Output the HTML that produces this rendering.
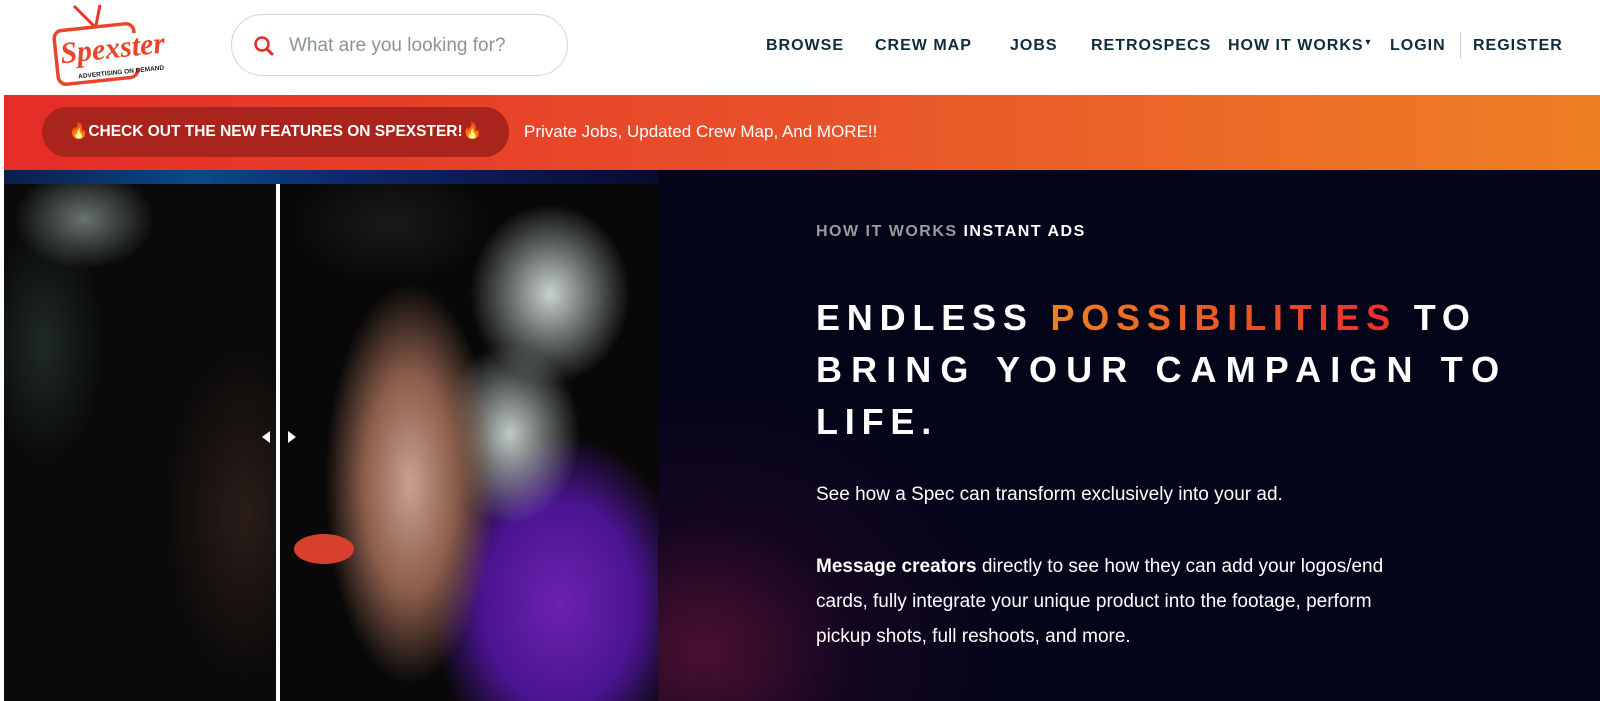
<!DOCTYPE html>
<html><head><meta charset="utf-8"><style>
*{margin:0;padding:0;box-sizing:border-box}
body{width:1600px;height:701px;overflow:hidden;background:#fff;font-family:"Liberation Sans",sans-serif;position:relative}
.hdr{position:absolute;left:0;top:0;width:1600px;height:94px;background:#fff}
.search{position:absolute;left:231px;top:14px;width:337px;height:62px;border:1px solid #cfd6da;border-radius:31px}
.search span{position:absolute;left:57px;top:20px;font-size:19px;color:#8a939c}
.nav{position:absolute;top:37px;font-size:16px;font-weight:bold;color:#0f2b3d;letter-spacing:1px}
.banner{position:absolute;left:4px;top:95px;width:1596px;height:75px;background:linear-gradient(90deg,#e52c27,#e8512a 50%,#ee7f24)}
.pill{position:absolute;left:38px;top:12px;width:467px;height:50px;border-radius:25px;background:#a8241c;color:#fff;font-weight:bold;font-size:15.5px;line-height:50px;text-align:center}
.btxt{position:absolute;left:520px;top:27px;color:#fff;font-size:17px}
.hero{position:absolute;left:4px;top:170px;width:1596px;height:531px;background:radial-gradient(ellipse 300px 260px at 700px 480px,#4a1030 0%,rgba(40,8,40,.4) 50%,transparent 100%),#05051a}
.photo{position:absolute;left:4px;top:184px;width:654px;height:517px;overflow:hidden;background:#060606}
h1{position:absolute;left:816px;top:292px;color:#fff;font-size:36px;font-weight:bold;letter-spacing:6.8px;line-height:52px;width:780px}
.p{position:absolute;left:816px;color:#fff;font-size:19px;line-height:35px;white-space:nowrap}
</style></head><body>
<div class="hdr">
<svg style="position:absolute;left:52px;top:3px" width="145" height="85" viewBox="0 0 145 85">
<path d="M22 3 L43 24 M48 2 L44 22" stroke="#e5342a" stroke-width="3" fill="none"/>
<rect x="4" y="24" width="80" height="54" rx="8" transform="rotate(-6 44 51)" stroke="#e8452a" stroke-width="3.5" fill="none"/>
<rect x="20" y="30" width="110" height="35" fill="#fff"/>
<text x="8" y="55" font-family="Liberation Serif,serif" font-style="italic" font-weight="bold" font-size="30" fill="#e8452a" transform="rotate(-6 60 45)">Spexster</text>
<text x="26" y="72" font-size="6.5" font-weight="bold" fill="#222" transform="rotate(-6 60 70)">ADVERTISING ON DEMAND</text>
</svg>
<div class="search"><svg style="position:absolute;left:21px;top:20px" width="22" height="22" viewBox="0 0 22 22"><circle cx="9" cy="9" r="6.5" stroke="#e52c27" stroke-width="2.5" fill="none"/><path d="M14 14 L19 19" stroke="#e52c27" stroke-width="3" stroke-linecap="round"/></svg><span>What are you looking for?</span></div>
<div class="nav" style="left:766px">BROWSE</div>
<div class="nav" style="left:875px">CREW MAP</div>
<div class="nav" style="left:1010px">JOBS</div>
<div class="nav" style="left:1091px">RETROSPECS</div>
<div class="nav" style="left:1228px">HOW IT WORKS<span style="font-size:9px;vertical-align:5px">▼</span></div>
<div class="nav" style="left:1390px">LOGIN</div>
<div style="position:absolute;left:1460px;top:32px;width:1px;height:26px;background:#ccc"></div>
<div class="nav" style="left:1473px">REGISTER</div>
</div>
<div class="banner"><div class="pill">🔥CHECK OUT THE NEW FEATURES ON SPEXSTER!🔥</div><div class="btxt">Private Jobs, Updated Crew Map, And MORE!!</div></div>
<div class="hero"></div>
<div style="position:absolute;left:4px;top:170px;width:654px;height:14px;background:linear-gradient(90deg,#0b1e4a,#0a4a8a 30%,#0c2a70 50%,#0a0a30)"></div>
<div class="photo">
<div style="position:absolute;left:0;top:0;width:273px;height:517px;background:radial-gradient(ellipse 70px 50px at 80px 35px,#6a7470,transparent),radial-gradient(ellipse 60px 120px at 40px 160px,#1f2a25,transparent),radial-gradient(ellipse 80px 170px at 240px 330px,#2a1d18,transparent),#0a0a0a"></div>
<div style="position:absolute;left:276px;top:0;width:378px;height:517px;background:
radial-gradient(ellipse 85px 200px at 130px 300px,#c9a08e 0%,#8a5c4a 55%,transparent 100%),
radial-gradient(ellipse 80px 90px at 270px 110px,#c8d2cf,transparent),
radial-gradient(ellipse 70px 90px at 230px 250px,#c0cac7,transparent),
radial-gradient(ellipse 130px 170px at 280px 420px,#6b22b0 0%,#4a1490 60%,transparent 100%),
radial-gradient(ellipse 100px 60px at 110px 40px,#1a1a1a,transparent),#080808"></div>
<div style="position:absolute;left:290px;top:350px;width:60px;height:30px;border-radius:50%;background:#d8402e"></div>
<div style="position:absolute;left:272px;top:0;width:4px;height:517px;background:#fff"></div>
<div style="position:absolute;left:258px;top:247px;width:0;height:0;border-top:6px solid transparent;border-bottom:6px solid transparent;border-right:8px solid #fff"></div>
<div style="position:absolute;left:284px;top:247px;width:0;height:0;border-top:6px solid transparent;border-bottom:6px solid transparent;border-left:8px solid #fff"></div>
</div>
<div style="position:absolute;left:816px;top:223px;font-size:16px;font-weight:bold;letter-spacing:1.5px;color:#9a9a9a">HOW IT WORKS <span style="color:#fff">INSTANT ADS</span></div>
<h1>ENDLESS <span style="background:linear-gradient(90deg,#f08020,#e8302a);-webkit-background-clip:text;color:transparent">POSSIBILITIES</span> TO<br><span style="letter-spacing:9.1px">BRING YOUR CAMPAIGN TO</span><br>LIFE.</h1>
<div class="p" style="top:477px">See how a Spec can transform exclusively into your ad.</div>
<div class="p" style="top:549px"><b>Message creators</b> directly to see how they can add your logos/end<br>cards, fully integrate your unique product into the footage, perform<br>pickup shots, full reshoots, and more.</div>
</body></html>
